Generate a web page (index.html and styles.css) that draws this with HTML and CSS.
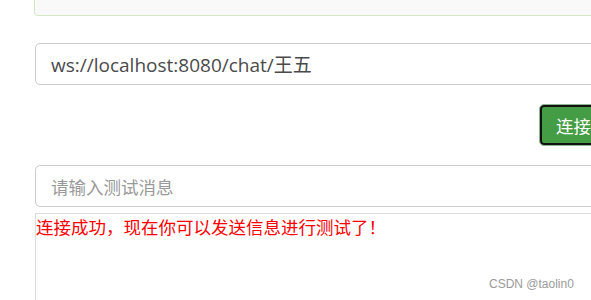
FILE: index.html
```html
<!DOCTYPE html>
<html lang="zh">
<head>
<meta charset="utf-8">
<link rel="stylesheet" href="styles.css">
</head>
<body>
<div class="page">
  <div class="panel"></div>
  <input class="field field-url" type="text" value="ws://localhost:8080/chat/王五">
  <div class="actions">
    <button class="btn-connect" type="button">连接</button>
  </div>
  <input class="field field-msg" type="text" placeholder="请输入测试消息">
  <div class="messages">
    <div class="msg-ok">连接成功，现在你可以发送信息进行测试了！</div>
  </div>
</div>
<div class="watermark">CSDN @taolin0</div>
</body>
</html>
```
FILE: styles.css
```css
html, body {
  margin: 0;
  padding: 0;
  background: #fff;
  overflow: hidden;
  height: 300px;
}
body {
  font-family: "Open Sans", "Noto Sans CJK SC", sans-serif;
  position: relative;
}
.page {
  width: 573px;
  padding-left: 35px;
  display: flex;
  flex-direction: column;
}
.panel {
  height: 15px;
  margin-left: -1px;
  border: 1px solid #d6e9c6;
  border-top: none;
  border-radius: 0 0 4px 4px;
  background: #f8f9f8;
}
.field {
  box-sizing: border-box;
  height: 42px;
  width: 100%;
  border: 1px solid #ccc;
  border-radius: 5px;
  padding: 0 15px;
  font-family: "Open Sans", "Noto Sans CJK SC", sans-serif;
  font-size: 17.5px;
  color: #555;
  outline: none;
  background: #fff;
}
.field::placeholder {
  color: #999;
}
.field-url {
  margin-top: 27px;
  font-size: 19px;
  color: #4a4a4a;
}
.actions {
  display: flex;
  justify-content: flex-end;
  margin-top: 19px;
}
.btn-connect {
  box-sizing: border-box;
  height: 42px;
  padding: 0 16px;
  border: 1px solid #8fb28f;
  border-radius: 5px;
  box-shadow: inset 0 0 0 2px #111;
  background: #449d44;
  color: #fff;
  font-family: "Noto Sans CJK SC", sans-serif;
  font-size: 17.5px;
}
.field-msg {
  margin-top: 19px;
  font-family: "Noto Sans CJK SC", sans-serif;
}
.messages {
  margin-top: 6px;
  height: 120px;
  border: 1px solid #ddd;
  border-right: none;
}
.msg-ok {
  color: #f00;
  font-family: "Noto Sans CJK SC", sans-serif;
  font-size: 17.5px;
  line-height: 26px;
}
.watermark {
  position: absolute;
  left: 489px;
  top: 277px;
  font-family: "Liberation Sans", sans-serif;
  font-size: 12px;
  color: #9a9a9a;
}
```
